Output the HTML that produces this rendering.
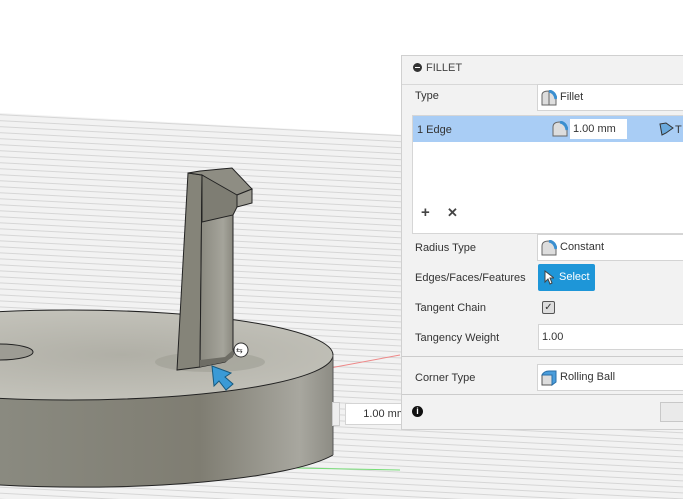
<!DOCTYPE html>
<html><head><style>
body{margin:0;width:683px;height:499px;overflow:hidden;background:#fff;font-family:"Liberation Sans",sans-serif;font-size:11px;color:#333;position:relative}
.p{position:absolute;left:401px;top:55px;width:290px;height:373px;background:#f2f2f2;border:1px solid #d0d0d0}
.a{position:absolute}
.in{position:absolute;background:#fff;border:1px solid #d4d4d4}
.ic{position:absolute;left:3px;top:5px}
</style></head><body>
<svg class="a" style="left:0;top:0" width="683" height="499">
<defs><pattern id="g" width="60" height="6" patternUnits="userSpaceOnUse" patternTransform="rotate(3)">
<rect width="60" height="6" fill="#f2f2f2"/><line x1="0" y1="0.5" x2="60" y2="0.5" stroke="#d6d6d6" stroke-width="1"/></pattern>
<linearGradient id="side" x1="0" x2="1"><stop offset="0" stop-color="#8a8a80"/><stop offset="0.6" stop-color="#7f7d72"/><stop offset="0.9" stop-color="#a8a79f"/><stop offset="1" stop-color="#8d8c84"/></linearGradient>
<radialGradient id="top" cx="0.6" cy="0.5" r="0.6"><stop offset="0" stop-color="#b0afa6"/><stop offset="1" stop-color="#c6c5bd"/></radialGradient>
<linearGradient id="pf" x1="0" x2="1"><stop offset="0" stop-color="#8a897f"/><stop offset="0.7" stop-color="#a5a49b"/><stop offset="1" stop-color="#8a897f"/></linearGradient>
</defs>
<polygon points="0,113 683,150 683,499 0,499" fill="url(#g)"/>
<line x1="330" y1="368" x2="400" y2="355" stroke="#e88" stroke-width="1"/>
<line x1="295" y1="468" x2="400" y2="470" stroke="#7d7" stroke-width="1"/>
<path d="M0,355 L333,355 L333,455 A263,45 0 0 1 0,485 Z" fill="url(#side)"/>
<path d="M333,455 A263,45 0 0 1 0,485" fill="none" stroke="#222" stroke-width="1"/>
<ellipse cx="70" cy="355" rx="263" ry="45" fill="url(#top)" stroke="#222" stroke-width="1"/>
<line x1="333" y1="355" x2="333" y2="455" stroke="#555"/>
<ellipse cx="0" cy="352" rx="33" ry="8" fill="#9d9c94" stroke="#222"/>
<ellipse cx="210" cy="362" rx="55" ry="10" fill="#9f9e95" opacity="0.6"/>
<polygon points="188,173 202,175 200,367 177,370" fill="#858479" stroke="#222" stroke-width="1"/>
<polygon points="202,175 233,195 233,355 225,362 200,367" fill="url(#pf)" stroke="#222" stroke-width="1"/>
<polygon points="188,173 200,171 232,168 252,189 237,195 233,195 202,175" fill="#8e8d83" stroke="#222"/>
<polygon points="237,195 252,189 252,203 237,207" fill="#9c9b92" stroke="#222"/>
<polygon points="202,175 237,195 237,207 233,215 202,222" fill="#7e7d73" stroke="#222"/>
<path d="M200,360 L225,357 L233,350 L233,357 L225,362 L200,367Z" fill="#6e6d65"/>
<circle cx="241" cy="350" r="7" fill="#fff" stroke="#333"/>
<text x="236" y="353" font-size="8" fill="#333">⇆</text>
<path d="M212,366 L214,386 L219,381 L226,390 L233,384 L225,377 L231,373 Z" fill="#3a9ad6" stroke="#15597f"/>
</svg>
<div class="a" style="left:332px;top:402px;width:6px;height:22px;background:#eee;border:1px solid #ccc"></div>
<div class="in" style="left:345px;top:403px;width:60px;height:20px;line-height:20px;text-align:right;padding-right:2px">1.00 mm</div>
<div class="p">
<div class="a" style="left:0;top:0;width:290px;height:28px;border-bottom:1px solid #d8d8d8;line-height:24px;font-size:11px;color:#444"><span style="display:inline-block;width:9px;height:9px;background:#333;border-radius:50%;margin:0 4px 0 11px;vertical-align:-1px;position:relative"><span style="position:absolute;left:2px;top:4px;width:5px;height:1px;background:#fff"></span></span>FILLET</div>
<div class="a" style="left:13px;top:34px">Type</div>
<div class="in" style="left:135px;top:28px;width:160px;height:25px;line-height:25px"><svg class="ic" width="16" height="16"><path d="M1,15 V5 Q1,1 8,1 L8,15Z" fill="#ddd" stroke="#666"/><path d="M8,1 Q14,1 15,8 L15,15 L8,15Z" fill="#dedede" stroke="#666"/><path d="M8,1 Q14,2 15,9" fill="none" stroke="#3a8fd0" stroke-width="3"/></svg><span style="margin-left:22px">Fillet</span></div>
<div class="a" style="left:10px;top:59px;width:290px;height:117px;background:#fff;border:1px solid #d6d6d6"></div>
<div class="a" style="left:11px;top:60px;width:290px;height:26px;background:#a9cdf5"></div>
<div class="a" style="left:15px;top:68px">1 Edge</div>
<svg class="a" style="left:150px;top:65px" width="16" height="16"><path d="M1,15 V6 Q1,1 8,1 Q14,1 15,8 V15Z" fill="#ddd" stroke="#666"/><path d="M8,1 Q14,2 15,9" fill="none" stroke="#3a8fd0" stroke-width="3"/></svg>
<div class="in" style="left:168px;top:63px;width:54px;height:20px;line-height:20px;border:0;padding-left:3px">1.00 mm</div>
<svg class="a" style="left:256px;top:66px" width="16" height="14"><path d="M2,2 L8,1 L15,6 L8,11 L4,13Z" fill="#6aa9dd" stroke="#333"/></svg>
<div class="a" style="left:273px;top:68px">T</div>
<div class="a" style="left:19px;top:148px;font-size:15px;font-weight:bold;color:#444">+</div>
<div class="a" style="left:45px;top:149px;font-size:13px;font-weight:bold;color:#444">✕</div>
<div class="a" style="left:13px;top:186px">Radius Type</div>
<div class="in" style="left:135px;top:178px;width:160px;height:25px;line-height:25px"><svg class="ic" width="16" height="16"><path d="M1,15 V6 Q1,1 8,1 Q14,1 15,8 V15Z" fill="#ddd" stroke="#666"/><path d="M8,1 Q14,2 15,9" fill="none" stroke="#3a8fd0" stroke-width="3"/></svg><span style="margin-left:22px">Constant</span></div>
<div class="a" style="left:13px;top:216px">Edges/Faces/Features</div>
<div class="a" style="left:136px;top:208px;width:57px;height:27px;background:#1e96d8;color:#fff;line-height:27px;border-radius:2px"><svg class="a" style="left:6px;top:6px" width="10" height="15"><path d="M1,1 L1,12 L4,9 L6,14 L8,13 L6,8 L10,8Z" fill="#fff" stroke="#444"/></svg><span style="margin-left:21px">Select</span></div>
<div class="a" style="left:13px;top:246px">Tangent Chain</div>
<div class="a" style="left:140px;top:245px;width:11px;height:11px;border:1px solid #555;background:#ddd;border-radius:2px;font-size:10px;line-height:11px;text-align:center">✓</div>
<div class="a" style="left:13px;top:276px">Tangency Weight</div>
<div class="in" style="left:136px;top:268px;width:160px;height:24px;line-height:24px;padding-left:3px">1.00</div>
<div class="a" style="left:0;top:300px;width:290px;height:1px;background:#ccc"></div>
<div class="a" style="left:13px;top:316px">Corner Type</div>
<div class="in" style="left:135px;top:308px;width:160px;height:25px;line-height:25px"><svg class="ic" width="16" height="16"><rect x="1" y="5" width="10" height="10" fill="#ddd" stroke="#555"/><path d="M1,5 Q3,1 8,1 L15,1 L15,12 L11,15 L11,5Z" fill="#4a9ddb" stroke="#2a6fa8"/></svg><span style="margin-left:22px">Rolling Ball</span></div>
<div class="a" style="left:0;top:338px;width:290px;height:1px;background:#ccc"></div>
<div class="a" style="left:10px;top:350px;width:11px;height:11px;border-radius:50%;background:#111;color:#fff;font-size:9px;font-weight:bold;text-align:center;line-height:11px">i</div>
<div class="a" style="left:258px;top:346px;width:40px;height:18px;border:1px solid #c8c8c8;background:#eaeaea"></div>
</div>
</body></html>
